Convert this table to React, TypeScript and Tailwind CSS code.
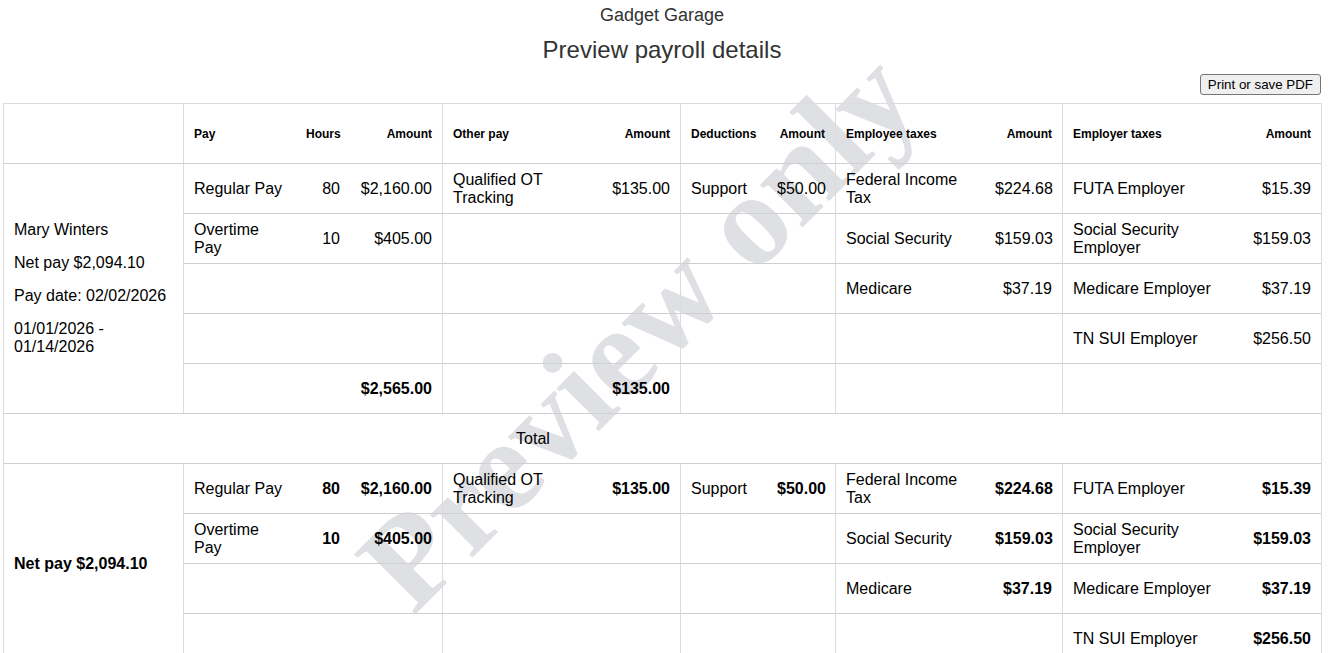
import React from 'react'

type Row = string[]

const headers = ['Pay', 'Hours', 'Amount', 'Other pay', 'Amount', 'Deductions', 'Amount', 'Employee taxes', 'Amount', 'Employer taxes', 'Amount']

// alignment and group starts for the 11 columns after the name column
const rightCols = [false, true, true, false, true, false, true, false, true, false, true]
const groupStart = [true, false, false, true, false, true, false, true, false, true, false]

const lines: Row[] = [
  ['Regular Pay', '80', '$2,160.00', 'Qualified OT Tracking', '$135.00', 'Support', '$50.00', 'Federal Income Tax', '$224.68', 'FUTA Employer', '$15.39'],
  ['Overtime Pay', '10', '$405.00', '', '', '', '', 'Social Security', '$159.03', 'Social Security Employer', '$159.03'],
  ['', '', '', '', '', '', '', 'Medicare', '$37.19', 'Medicare Employer', '$37.19'],
  ['', '', '', '', '', '', '', '', '', 'TN SUI Employer', '$256.50'],
]

const subtotal: Row = ['', '', '$2,565.00', '', '$135.00', '', '', '', '', '', '']

const widths = [180, 113, 54, 92, 160, 78, 87, 68, 150, 77, 176, 83]

function cellClass(i: number, extra = '') {
  return [
    'border-t border-[#cfcfd2] px-[10px] align-middle',
    groupStart[i] ? 'border-l border-l-[#dcdcdc]' : '',
    rightCols[i] ? 'text-right' : 'text-left',
    extra,
  ].join(' ')
}

function BodyRow({ row, boldNumbers, lead }: { row: Row; boldNumbers?: boolean; lead?: React.ReactNode }) {
  return (
    <tr className="h-[50px]">
      {lead}
      {row.map((text, i) => (
        <td key={i} className={cellClass(i, boldNumbers && rightCols[i] ? 'font-bold' : '')}>
          {text}
        </td>
      ))}
    </tr>
  )
}

export default function App() {
  return (
    <div className="relative ml-[3px] w-[1318px] font-['Liberation_Sans',Arial,sans-serif] text-black">
      <div className="pt-[5px] text-center text-[18px] leading-[21px] text-[#333]">Gadget Garage</div>
      <h1 className="mt-[10px] text-center text-[24px] leading-[28px] text-[#333]">Preview payroll details</h1>

      <div className="mt-[10px] flex justify-end">
        <button
          type="button"
          className="h-[21px] rounded-[3px] border border-[#767676] bg-[#efefef] px-[7px] text-[13.33px] leading-[15px] text-black"
        >
          Print or save PDF
        </button>
      </div>

      {/* watermark */}
      <div className="pointer-events-none absolute left-[634px] top-[330px] -translate-x-1/2 -translate-y-1/2 -rotate-45 whitespace-nowrap font-['Liberation_Serif','Times_New_Roman',serif] text-[131px] font-bold leading-none text-[#dfe0e4]">
        Preview only
      </div>

      <table className="relative z-[1] mt-[8px] w-[1318px] table-fixed border-separate border-spacing-0 border-r border-b border-r-[#dcdcdc] border-b-[#cfcfd2] text-[16px] leading-[18px]">
        <colgroup>
          {widths.map((w, i) => (
            <col key={i} style={{ width: w }} />
          ))}
        </colgroup>
        <thead>
          <tr className="h-[60px]">
            <th className="border-t border-l border-[#dcdcdc]" />
            {headers.map((h, i) => (
              <th key={i} className={cellClass(i, 'border-t-[#dcdcdc] text-[12px] font-bold')}>
                {h}
              </th>
            ))}
          </tr>
        </thead>
        <tbody>
          {lines.map((row, r) => (
            <BodyRow
              key={r}
              row={row}
              lead={
                r === 0 ? (
                  <td rowSpan={5} className="border-t border-l border-[#cfcfd2] border-l-[#dcdcdc] px-[10px] align-middle">
                    <div className="flex flex-col gap-[15px]">
                      <p>Mary Winters</p>
                      <p>Net pay $2,094.10</p>
                      <p>Pay date: 02/02/2026</p>
                      <p>01/01/2026 - 01/14/2026</p>
                    </div>
                  </td>
                ) : null
              }
            />
          ))}
          <BodyRow row={subtotal} boldNumbers />

          <tr className="h-[50px]">
            <td colSpan={10} className="border-t border-l border-[#cfcfd2] border-l-[#dcdcdc] text-center align-middle">
              Total
            </td>
            <td colSpan={2} className="border-t border-[#cfcfd2]" />
          </tr>

          {lines.map((row, r) => (
            <BodyRow
              key={`t${r}`}
              row={row}
              boldNumbers
              lead={
                r === 0 ? (
                  <td rowSpan={4} className="border-t border-l border-[#cfcfd2] border-l-[#dcdcdc] px-[10px] align-middle font-bold">
                    Net pay $2,094.10
                  </td>
                ) : null
              }
            />
          ))}
        </tbody>
      </table>
    </div>
  )
}
